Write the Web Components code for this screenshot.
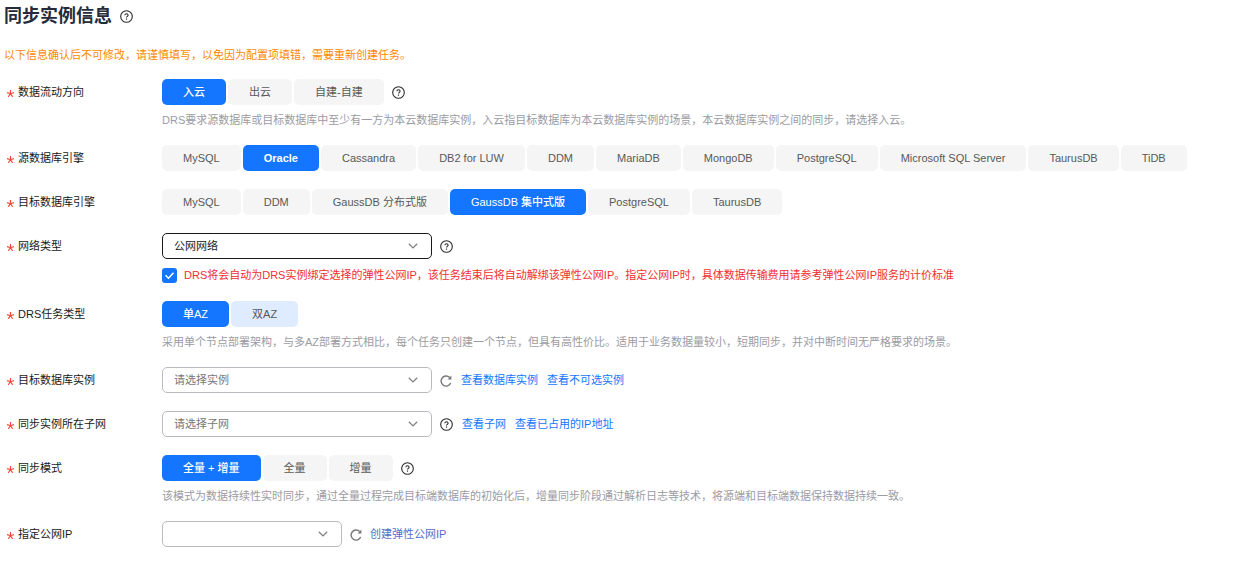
<!DOCTYPE html>
<html lang="zh-CN">
<head>
<meta charset="utf-8">
<meta name="viewport" content="width=device-width, initial-scale=1">
<title>同步实例信息</title>
<style>
  body {
    margin: 0;
    background: #fff;
    color: #191919;
    font: 11px/16px "Liberation Sans", "Noto Sans CJK SC", sans-serif;
  }
</style>
</head>
<body>
<sync-form>
  <form-heading slot="heading">同步实例信息</form-heading>
  <span slot="warning">以下信息确认后不可修改，请谨慎填写，以免因为配置项填错，需要重新创建任务。</span>

  <form-row>
    <span slot="label">数据流动方向</span>
    <pill-group label="数据流动方向">
      <option-pill selected>入云</option-pill><option-pill>出云</option-pill><option-pill>自建-自建</option-pill>
    </pill-group>
    <help-icon></help-icon>
    <span slot="hint">DRS要求源数据库或目标数据库中至少有一方为本云数据库实例，入云指目标数据库为本云数据库实例的场景，本云数据库实例之间的同步，请选择入云。</span>
  </form-row>

  <form-row>
    <span slot="label">源数据库引擎</span>
    <pill-group label="源数据库引擎">
      <option-pill>MySQL</option-pill><option-pill selected strong>Oracle</option-pill><option-pill>Cassandra</option-pill><option-pill>DB2 for LUW</option-pill><option-pill>DDM</option-pill><option-pill>MariaDB</option-pill><option-pill>MongoDB</option-pill><option-pill>PostgreSQL</option-pill><option-pill>Microsoft SQL Server</option-pill><option-pill>TaurusDB</option-pill><option-pill>TiDB</option-pill>
    </pill-group>
  </form-row>

  <form-row>
    <span slot="label">目标数据库引擎</span>
    <pill-group label="目标数据库引擎">
      <option-pill>MySQL</option-pill><option-pill>DDM</option-pill><option-pill>GaussDB 分布式版</option-pill><option-pill selected>GaussDB 集中式版</option-pill><option-pill>PostgreSQL</option-pill><option-pill>TaurusDB</option-pill>
    </pill-group>
  </form-row>

  <form-row>
    <label slot="label" for="network">网络类型</label>
    <drop-down active><select id="network"><option>公网网络</option></select></drop-down>
    <help-icon></help-icon>
    <check-notice slot="hint">DRS将会自动为DRS实例绑定选择的弹性公网IP，该任务结束后将自动解绑该弹性公网IP。指定公网IP时，具体数据传输费用请参考弹性公网IP服务的计价标准</check-notice>
  </form-row>

  <form-row>
    <span slot="label">DRS任务类型</span>
    <pill-group label="DRS任务类型">
      <option-pill selected>单AZ</option-pill><option-pill hovered>双AZ</option-pill>
    </pill-group>
    <span slot="hint">采用单个节点部署架构，与多AZ部署方式相比，每个任务只创建一个节点，但具有高性价比。适用于业务数据量较小，短期同步，并对中断时间无严格要求的场景。</span>
  </form-row>

  <form-row>
    <label slot="label" for="instance">目标数据库实例</label>
    <drop-down><select id="instance"><option>请选择实例</option></select></drop-down>
    <refresh-button></refresh-button>
    <text-link>查看数据库实例</text-link>
    <text-link>查看不可选实例</text-link>
  </form-row>

  <form-row>
    <label slot="label" for="subnet">同步实例所在子网</label>
    <drop-down><select id="subnet"><option>请选择子网</option></select></drop-down>
    <help-icon></help-icon>
    <text-link>查看子网</text-link>
    <text-link>查看已占用的IP地址</text-link>
  </form-row>

  <form-row>
    <span slot="label">同步模式</span>
    <pill-group label="同步模式">
      <option-pill selected>全量 + 增量</option-pill><option-pill>全量</option-pill><option-pill>增量</option-pill>
    </pill-group>
    <help-icon></help-icon>
    <span slot="hint">该模式为数据持续性实时同步，通过全量过程完成目标端数据库的初始化后，增量同步阶段通过解析日志等技术，将源端和目标端数据保持数据持续一致。</span>
  </form-row>

  <form-row>
    <label slot="label" for="eip">指定公网IP</label>
    <drop-down small><select id="eip"><option></option></select></drop-down>
    <refresh-button></refresh-button>
    <text-link muted>创建弹性公网IP</text-link>
  </form-row>
</sync-form>

<script>
  const define = (name, html, setup) => {
    const template = document.createElement('template');
    template.innerHTML = html;
    customElements.define(name, class extends HTMLElement {
      constructor() {
        super();
        this.attachShadow({ mode: 'open' }).append(template.content.cloneNode(true));
      }
      connectedCallback() {
        if (setup) setup(this, this.shadowRoot);
      }
    });
  };

  define('sync-form', `
    <style>
      :host { display: block; padding: 3px 4px 24px; }
      .warning { margin: 18px 0 16px; color: #ff8800; }
      form { display: flex; flex-direction: column; gap: 18px; }
    </style>
    <header><slot name="heading"></slot></header>
    <p class="warning"><slot name="warning"></slot></p>
    <form><slot></slot></form>`);

  define('form-heading', `
    <style>
      :host { display: flex; align-items: center; gap: 8px; }
      h1 { margin: 0; font-size: 18px; line-height: 26px; font-weight: 700; color: #252b3a; }
    </style>
    <h1><slot></slot></h1><help-icon></help-icon>`);

  define('form-row', `
    <style>
      :host { display: grid; grid-template-columns: 158px minmax(0, 1fr); }
      .label { display: flex; align-items: center; gap: 4px; height: 26px; padding-left: 3px; }
      .star { width: 7px; height: 7px; margin-top: 2px; fill: none; stroke: #f5483b; stroke-width: 1.2; }
      .controls { display: flex; align-items: center; gap: 8px; min-height: 26px; }
      .hint { grid-column: 2; color: #9b9ba3; }
      ::slotted([slot="hint"]) { display: block; margin-top: 8px; line-height: 14px; }
    </style>
    <div class="label">
      <svg class="star" viewBox="0 0 7 7" aria-hidden="true"><path d="M3.5 0v3.7M0 2.5l3.5 1.2L7 2.5M1.3 6.8l2.2-3.1 2.2 3.1"/></svg>
      <slot name="label"></slot>
    </div>
    <div class="controls"><slot></slot></div>
    <div class="hint"><slot name="hint"></slot></div>`);

  define('pill-group', `
    <style>
      :host { display: block; }
      div { display: flex; flex-wrap: wrap; gap: 2px; }
    </style>
    <div role="group"><slot></slot></div>`,
    (host, root) => root.querySelector('div').setAttribute('aria-label', host.getAttribute('label')));

  define('option-pill', `
    <style>
      :host { display: block; }
      button {
        display: block; height: 26px; padding: 0 21px; border: 0; border-radius: 5px;
        background: #f5f5f5; color: #595959; font: inherit; white-space: nowrap; cursor: pointer;
      }
      :host([hovered]) button, button:hover { background: #dfebff; }
      :host([selected]) button { background: #1476ff; color: #fff; font-weight: 500; }
      :host([strong]) button { font-weight: 700; }
    </style>
    <button type="button"><slot></slot></button>`,
    (host, root) => {
      const button = root.querySelector('button');
      button.setAttribute('aria-pressed', host.hasAttribute('selected'));
      button.onclick = () => {
        for (const pill of host.parentElement.querySelectorAll('option-pill')) {
          pill.toggleAttribute('selected', pill === host);
          pill.shadowRoot.querySelector('button').setAttribute('aria-pressed', pill === host);
        }
      };
    });

  define('drop-down', `
    <style>
      :host { display: grid; position: relative; width: 270px; color: #777; }
      :host([small]) { width: 180px; }
      :host([active]) { color: #191919; }
      ::slotted(select) {
        appearance: none; box-sizing: border-box; width: 100%; height: 26px; margin: 0;
        padding: 0 32px 0 11px; border: 1px solid #babbc0; border-radius: 5px; outline: 0;
        background: #fff; color: inherit; font: inherit;
      }
      :host([active]) ::slotted(select) { border-color: #191919; }
      svg {
        position: absolute; right: 13px; top: 7px; width: 12px; height: 12px;
        fill: none; stroke: #808080; stroke-width: 1.3; pointer-events: none;
      }
    </style>
    <slot></slot>
    <svg viewBox="0 0 12 12" aria-hidden="true"><path d="M1.8 3.7L6 7.9l4.2-4.2"/></svg>`);

  define('help-icon', `
    <style>
      :host { display: block; width: 13px; height: 13px; margin-top: 1px; }
      svg { display: block; width: 13px; height: 13px; fill: none; stroke: #2b2b2b; stroke-width: 1.1; }
    </style>
    <svg viewBox="0 0 13 13" role="img" aria-label="帮助">
      <circle cx="6.5" cy="6.5" r="5.8"/>
      <path d="M4.9 5.3c0-1 .6-1.6 1.6-1.6s1.6.6 1.6 1.5c0 1.1-1.6 1.2-1.6 2.4"/>
      <path d="M6.5 8.5v1.2" stroke-width="1.2"/>
    </svg>`);

  define('refresh-button', `
    <style>
      :host { display: block; }
      button { display: block; padding: 0; border: 0; background: none; cursor: pointer; }
      svg { display: block; width: 12px; height: 12px; margin-top: 1px; fill: none; stroke: #777; stroke-width: 1.4; }
      .tip { fill: #777; stroke: none; }
    </style>
    <button type="button" aria-label="刷新">
      <svg viewBox="0 0 12 12"><path d="M10.7 8A5 5 0 1 1 9.7 2.6"/><path class="tip" d="M11.4.6v4H7.6z"/></svg>
    </button>`);

  define('text-link', `
    <style>
      :host { display: block; margin-left: 1px; }
      a { color: #1476ff; text-decoration: none; }
      :host([muted]) { margin-left: 0; }
      :host([muted]) a { color: #526ecc; }
    </style>
    <a href="#"><slot></slot></a>`);

  define('check-notice', `
    <style>
      :host { display: block; color: #f22f2f; }
      label { display: flex; align-items: flex-start; gap: 7px; line-height: 16px; }
      .box { display: grid; flex: none; width: 15px; height: 15px; margin-top: 1px; }
      input, svg { grid-area: 1 / 1; width: 15px; height: 15px; margin: 0; }
      input { appearance: none; border-radius: 3px; background: #1476ff; }
      svg { fill: none; stroke: #fff; stroke-width: 1.5; pointer-events: none; }
    </style>
    <label>
      <span class="box">
        <input type="checkbox" checked>
        <svg viewBox="0 0 15 15" aria-hidden="true"><path d="M3.5 7.2l3 3 5-5.4"/></svg>
      </span>
      <span><slot></slot></span>
    </label>`);
</script>
</body>
</html>
